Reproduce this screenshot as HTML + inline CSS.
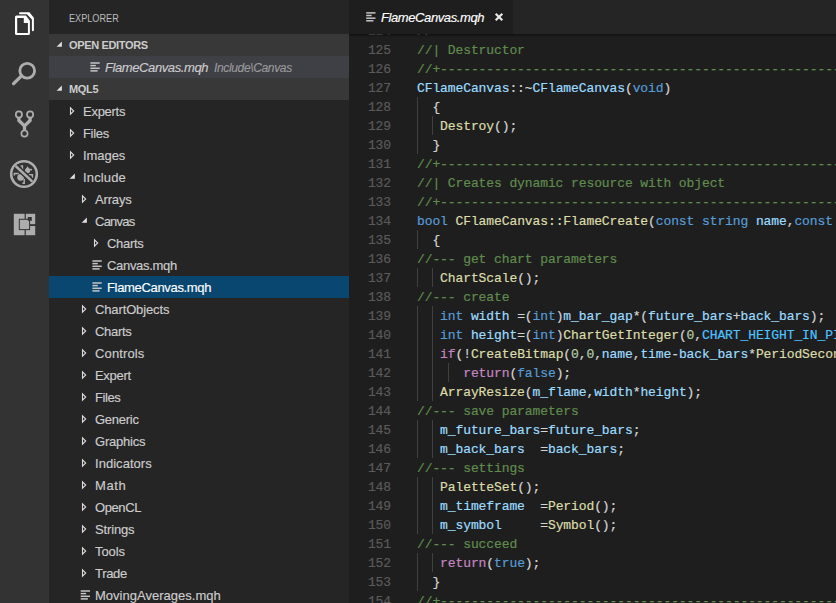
<!DOCTYPE html>
<html><head><meta charset="utf-8">
<style>
*{margin:0;padding:0;box-sizing:border-box}
html,body{width:836px;height:603px;overflow:hidden;background:#1e1e1e}
body{position:relative;font-family:"Liberation Sans",sans-serif}
.ic{position:absolute;left:0;top:0}
#act{position:absolute;left:0;top:0;width:49px;height:603px;background:#333333}
#side{position:absolute;left:49px;top:0;width:300px;height:603px;background:#252526;overflow:hidden}
.title{position:absolute;left:20px;top:12px;font-size:11px;line-height:12px;color:#bbbbbb;transform:scaleX(0.83);transform-origin:0 0}
.hdr{position:absolute;left:0;width:300px;height:22px;background:#383838}
.hdr .t{position:absolute;left:20px;top:0;font-size:11px;font-weight:bold;line-height:22px;color:#cccccc;letter-spacing:-0.35px}
.row{position:absolute;left:0;width:300px;height:22px;font-size:13px;line-height:22px;color:#cccccc;white-space:nowrap;-webkit-text-stroke:0.15px currentColor}
.row .t{position:absolute;top:1px;letter-spacing:-0.3px}
.oe{background:#3f3f46}
.it{font-style:italic;letter-spacing:-0.4px !important}
.it2{font-style:italic;font-size:12px;color:#9a9a9c;letter-spacing:-0.35px !important}
.sel{background:#094771;color:#ffffff}
#ed{position:absolute;left:349px;top:0;width:487px;height:603px;background:#1e1e1e;overflow:hidden}
#code{position:absolute;left:0;top:22px;width:487px;font-family:"Liberation Mono",monospace;font-size:13px;letter-spacing:-0.1px;line-height:19px;white-space:pre;color:#d4d4d4;-webkit-text-stroke:0.2px currentColor}
.ln{position:absolute;left:0;width:487px;height:19px}
.ln .n{position:absolute;left:0;width:42px;text-align:right;color:#5a5a5a}
.ln .c{position:absolute;left:68px}
.g{position:absolute;top:-1px;width:1px;height:19px;background:#404040}
.cm{color:#608b4e}.kw{color:#569cd6}.fn{color:#dcdcaa}.vr{color:#9cdcfe}.nm{color:#b5cea8}.ct{color:#c586c0}.cs{color:#4fc1ff}
#tabs{position:absolute;left:0;top:0;width:487px;height:34px;background:#252526}
#tab{position:absolute;left:0;top:0;width:164px;height:34px;background:#1e1e1e}
#tab .t{position:absolute;left:32px;top:10px;font-style:italic;font-size:13px;line-height:15px;color:#ffffff;letter-spacing:-0.4px;-webkit-text-stroke:0.15px currentColor}
#shadow{position:absolute;left:0;top:34px;width:487px;height:3px;background:linear-gradient(rgba(0,0,0,0.45),rgba(0,0,0,0))}

</style></head><body>
<div id="act">
<svg width="49" height="603" viewBox="0 0 49 603" style="position:absolute;left:0;top:0">
 <path fill="#ffffff" d="M20,12.3 L29.4,12.3 L33.9,17.7 L33.9,30.2 Q33.9,31.2 32.9,31.2 Q31.9,31.2 31.9,30.2 L31.9,19.4 L26.9,14.3 L20,14.3 Q19,14.3 19,13.3 Q19,12.3 20,12.3 Z"/>
 <path fill="#ffffff" fill-rule="evenodd" d="M16.5,15.6 L25.9,15.6 L29.9,20.7 L29.9,33.6 Q29.9,35.1 28.4,35.1 L16.5,35.1 Q15,35.1 15,33.6 L15,17 Q15,15.5 16.5,15.5 Z M17.2,18 L23.8,18 L23.8,22.9 L27.9,22.9 L27.9,32.9 L17.2,32.9 Z"/>
 <circle cx="27.2" cy="70.7" r="7.4" fill="none" stroke="#adadad" stroke-width="2.8"/>
 <line x1="13.6" y1="83.6" x2="21.5" y2="75.9" stroke="#adadad" stroke-width="3.4" stroke-linecap="round"/>
 <g fill="none" stroke="#adadad">
  <circle cx="18.9" cy="114.5" r="3.1" stroke-width="1.7"/>
  <circle cx="30.1" cy="114.5" r="3.1" stroke-width="1.7"/>
  <circle cx="24.5" cy="133.6" r="3.1" stroke-width="1.7"/>
  <path d="M18.9,117.5 L18.9,120.5 L24.5,126 L30.1,120.5 L30.1,117.5 M24.5,125 L24.5,130.5" stroke-width="3.3"/>
 </g>
 <circle cx="24" cy="174" r="12.8" fill="none" stroke="#adadad" stroke-width="2.6"/>
 <g fill="#adadad">
  <circle cx="20.6" cy="177.4" r="3.3"/>
  <circle cx="27.6" cy="170.6" r="2.6"/><path d="M25.4,169.4 L27.6,166.2 L29.8,169.4 Z"/>
 </g>
 <g fill="none" stroke="#adadad" stroke-width="1.5">
  <path d="M14.4,175.6 L14.4,173.6 L18.8,173.6"/>
  <path d="M24.2,178.8 L24.2,183.3 L22.4,183.3"/>
  <path d="M20.6,165.9 L22.4,165.9 L22.4,170.5"/>
  <path d="M29,169.6 L32,169.6"/>
  <path d="M28.4,174.8 L32.4,174.8 L32.4,177.8"/>
 </g>
 <line x1="15.6" y1="166.0" x2="32.4" y2="181.6" stroke="#333333" stroke-width="5.4"/>
 <line x1="15.6" y1="166.0" x2="32.4" y2="181.6" stroke="#adadad" stroke-width="2.5"/>
 <g fill="#adadad">
  <rect x="13.8" y="213.8" width="10.8" height="21.4"/>
  <rect x="25.8" y="213.8" width="9.4" height="10.4"/>
  <rect x="25.8" y="226" width="9.4" height="9.2"/>
 </g>
 <rect x="18.8" y="218.8" width="11.3" height="11.3" fill="#333333"/>
 <rect x="19.8" y="219.8" width="9.3" height="9.3" fill="#adadad"/>
 <rect x="27.8" y="217" width="4" height="3.8" fill="#333333"/>
</svg>

</div>
<div id="side">
 <div class="title">EXPLORER</div>
 <div class="hdr" style="top:34px"><svg class="ic" width="20" height="22"><path d="M7.6,12.7 L12.9,12.7 L12.9,7.6 Z" fill="#e0e0e0"/></svg><span class="t">OPEN EDITORS</span></div>
 <div class="row oe" style="top:56px"><svg class="ic" width="60" height="22"><rect x="41.40" y="6.25" width="9.3" height="1.5" fill="#c5c5c5"/><rect x="41.40" y="8.85" width="5.4" height="1.5" fill="#c5c5c5"/><rect x="41.40" y="11.55" width="9.3" height="1.5" fill="#c5c5c5"/><rect x="41.40" y="14.15" width="7.2" height="1.5" fill="#c5c5c5"/></svg><span class="t it" style="left:56px">FlameCanvas.mqh</span><span class="t it2" style="left:165px">Include\Canvas</span></div>
 <div class="hdr" style="top:78px"><svg class="ic" width="20" height="22"><path d="M7.6,12.7 L12.9,12.7 L12.9,7.6 Z" fill="#e0e0e0"/></svg><span class="t">MQL5</span></div>
<div class="row" style="top:100px"><svg class="ic" width="80" height="22"><path d="M21.5,7.8 L21.5,14.2 L24.7,11 Z" fill="none" stroke="#dcdcdc" stroke-width="1.1" stroke-linejoin="miter"/></svg><span class="t" style="left:34px;letter-spacing:-0.27px">Experts</span></div>
<div class="row" style="top:122px"><svg class="ic" width="80" height="22"><path d="M21.5,7.8 L21.5,14.2 L24.7,11 Z" fill="none" stroke="#dcdcdc" stroke-width="1.1" stroke-linejoin="miter"/></svg><span class="t" style="left:34px;letter-spacing:-0.32px">Files</span></div>
<div class="row" style="top:144px"><svg class="ic" width="80" height="22"><path d="M21.5,7.8 L21.5,14.2 L24.7,11 Z" fill="none" stroke="#dcdcdc" stroke-width="1.1" stroke-linejoin="miter"/></svg><span class="t" style="left:34px;letter-spacing:-0.06px">Images</span></div>
<div class="row" style="top:166px"><svg class="ic" width="80" height="22"><path d="M20.6,12.7 L25.9,12.7 L25.9,7.6 Z" fill="#e0e0e0"/></svg><span class="t" style="left:34px;letter-spacing:0.15px">Include</span></div>
<div class="row" style="top:188px"><svg class="ic" width="80" height="22"><path d="M33.5,7.8 L33.5,14.2 L36.7,11 Z" fill="none" stroke="#dcdcdc" stroke-width="1.1" stroke-linejoin="miter"/></svg><span class="t" style="left:46px;letter-spacing:-0.16px">Arrays</span></div>
<div class="row" style="top:210px"><svg class="ic" width="80" height="22"><path d="M32.6,12.7 L37.9,12.7 L37.9,7.6 Z" fill="#e0e0e0"/></svg><span class="t" style="left:46px;letter-spacing:-0.76px">Canvas</span></div>
<div class="row" style="top:232px"><svg class="ic" width="80" height="22"><path d="M45.5,7.8 L45.5,14.2 L48.7,11 Z" fill="none" stroke="#dcdcdc" stroke-width="1.1" stroke-linejoin="miter"/></svg><span class="t" style="left:58px;letter-spacing:-0.30px">Charts</span></div>
<div class="row" style="top:254px"><svg class="ic" width="60" height="22"><rect x="43.40" y="6.25" width="9.3" height="1.5" fill="#c5c5c5"/><rect x="43.40" y="8.85" width="5.4" height="1.5" fill="#c5c5c5"/><rect x="43.40" y="11.55" width="9.3" height="1.5" fill="#c5c5c5"/><rect x="43.40" y="14.15" width="7.2" height="1.5" fill="#c5c5c5"/></svg><span class="t" style="left:58px;letter-spacing:-0.31px">Canvas.mqh</span></div>
<div class="row sel" style="top:276px"><svg class="ic" width="60" height="22"><rect x="43.40" y="6.25" width="9.3" height="1.5" fill="#c5c5c5"/><rect x="43.40" y="8.85" width="5.4" height="1.5" fill="#c5c5c5"/><rect x="43.40" y="11.55" width="9.3" height="1.5" fill="#c5c5c5"/><rect x="43.40" y="14.15" width="7.2" height="1.5" fill="#c5c5c5"/></svg><span class="t" style="left:58px;letter-spacing:-0.33px">FlameCanvas.mqh</span></div>
<div class="row" style="top:298px"><svg class="ic" width="80" height="22"><path d="M33.5,7.8 L33.5,14.2 L36.7,11 Z" fill="none" stroke="#dcdcdc" stroke-width="1.1" stroke-linejoin="miter"/></svg><span class="t" style="left:46px;letter-spacing:-0.13px">ChartObjects</span></div>
<div class="row" style="top:320px"><svg class="ic" width="80" height="22"><path d="M33.5,7.8 L33.5,14.2 L36.7,11 Z" fill="none" stroke="#dcdcdc" stroke-width="1.1" stroke-linejoin="miter"/></svg><span class="t" style="left:46px;letter-spacing:-0.30px">Charts</span></div>
<div class="row" style="top:342px"><svg class="ic" width="80" height="22"><path d="M33.5,7.8 L33.5,14.2 L36.7,11 Z" fill="none" stroke="#dcdcdc" stroke-width="1.1" stroke-linejoin="miter"/></svg><span class="t" style="left:46px;letter-spacing:0.13px">Controls</span></div>
<div class="row" style="top:364px"><svg class="ic" width="80" height="22"><path d="M33.5,7.8 L33.5,14.2 L36.7,11 Z" fill="none" stroke="#dcdcdc" stroke-width="1.1" stroke-linejoin="miter"/></svg><span class="t" style="left:46px;letter-spacing:-0.30px">Expert</span></div>
<div class="row" style="top:386px"><svg class="ic" width="80" height="22"><path d="M33.5,7.8 L33.5,14.2 L36.7,11 Z" fill="none" stroke="#dcdcdc" stroke-width="1.1" stroke-linejoin="miter"/></svg><span class="t" style="left:46px;letter-spacing:-0.40px">Files</span></div>
<div class="row" style="top:408px"><svg class="ic" width="80" height="22"><path d="M33.5,7.8 L33.5,14.2 L36.7,11 Z" fill="none" stroke="#dcdcdc" stroke-width="1.1" stroke-linejoin="miter"/></svg><span class="t" style="left:46px;letter-spacing:-0.27px">Generic</span></div>
<div class="row" style="top:430px"><svg class="ic" width="80" height="22"><path d="M33.5,7.8 L33.5,14.2 L36.7,11 Z" fill="none" stroke="#dcdcdc" stroke-width="1.1" stroke-linejoin="miter"/></svg><span class="t" style="left:46px;letter-spacing:-0.23px">Graphics</span></div>
<div class="row" style="top:452px"><svg class="ic" width="80" height="22"><path d="M33.5,7.8 L33.5,14.2 L36.7,11 Z" fill="none" stroke="#dcdcdc" stroke-width="1.1" stroke-linejoin="miter"/></svg><span class="t" style="left:46px;letter-spacing:0.04px">Indicators</span></div>
<div class="row" style="top:474px"><svg class="ic" width="80" height="22"><path d="M33.5,7.8 L33.5,14.2 L36.7,11 Z" fill="none" stroke="#dcdcdc" stroke-width="1.1" stroke-linejoin="miter"/></svg><span class="t" style="left:46px;letter-spacing:0.60px">Math</span></div>
<div class="row" style="top:496px"><svg class="ic" width="80" height="22"><path d="M33.5,7.8 L33.5,14.2 L36.7,11 Z" fill="none" stroke="#dcdcdc" stroke-width="1.1" stroke-linejoin="miter"/></svg><span class="t" style="left:46px;letter-spacing:-0.40px">OpenCL</span></div>
<div class="row" style="top:518px"><svg class="ic" width="80" height="22"><path d="M33.5,7.8 L33.5,14.2 L36.7,11 Z" fill="none" stroke="#dcdcdc" stroke-width="1.1" stroke-linejoin="miter"/></svg><span class="t" style="left:46px;letter-spacing:-0.15px">Strings</span></div>
<div class="row" style="top:540px"><svg class="ic" width="80" height="22"><path d="M33.5,7.8 L33.5,14.2 L36.7,11 Z" fill="none" stroke="#dcdcdc" stroke-width="1.1" stroke-linejoin="miter"/></svg><span class="t" style="left:46px;letter-spacing:-0.07px">Tools</span></div>
<div class="row" style="top:562px"><svg class="ic" width="80" height="22"><path d="M33.5,7.8 L33.5,14.2 L36.7,11 Z" fill="none" stroke="#dcdcdc" stroke-width="1.1" stroke-linejoin="miter"/></svg><span class="t" style="left:46px;letter-spacing:-0.32px">Trade</span></div>
<div class="row" style="top:584px"><svg class="ic" width="60" height="22"><rect x="31.70" y="6.25" width="9.3" height="1.5" fill="#c5c5c5"/><rect x="31.70" y="8.85" width="5.4" height="1.5" fill="#c5c5c5"/><rect x="31.70" y="11.55" width="9.3" height="1.5" fill="#c5c5c5"/><rect x="31.70" y="14.15" width="7.2" height="1.5" fill="#c5c5c5"/></svg><span class="t" style="left:46px;letter-spacing:0.02px">MovingAverages.mqh</span></div>
</div>
<div id="ed">
 <div id="code">
<div class="ln" style="top:0px"><span class="n">124</span><span class="c"><span class="cm">//+------------------------------------------------------------------+</span></span></div>
<div class="ln" style="top:19px"><span class="n">125</span><span class="c"><span class="cm">//| Destructor                                                       |</span></span></div>
<div class="ln" style="top:38px"><span class="n">126</span><span class="c"><span class="cm">//+------------------------------------------------------------------+</span></span></div>
<div class="ln" style="top:57px"><span class="n">127</span><span class="c"><span class="vr">CFlameCanvas</span>::~<span class="vr">CFlameCanvas</span>(<span class="kw">void</span>)</span></div>
<div class="ln" style="top:76px"><span class="n">128</span><i class="g" style="left:68px"></i><span class="c">  {</span></div>
<div class="ln" style="top:95px"><span class="n">129</span><i class="g" style="left:68px"></i><i class="g" style="left:83px"></i><span class="c">   <span class="fn">Destroy</span>();</span></div>
<div class="ln" style="top:114px"><span class="n">130</span><i class="g" style="left:68px"></i><span class="c">  }</span></div>
<div class="ln" style="top:133px"><span class="n">131</span><span class="c"><span class="cm">//+------------------------------------------------------------------+</span></span></div>
<div class="ln" style="top:152px"><span class="n">132</span><span class="c"><span class="cm">//| Creates dynamic resource with object                             |</span></span></div>
<div class="ln" style="top:171px"><span class="n">133</span><span class="c"><span class="cm">//+------------------------------------------------------------------+</span></span></div>
<div class="ln" style="top:190px"><span class="n">134</span><span class="c"><span class="kw">bool</span> <span class="fn">CFlameCanvas::FlameCreate</span>(<span class="kw">const</span> <span class="kw">string</span> <span class="vr">name</span>,<span class="kw">const</span> <span class="kw">datetime</span> <span class="vr">time</span></span></div>
<div class="ln" style="top:209px"><span class="n">135</span><i class="g" style="left:68px"></i><span class="c">  {</span></div>
<div class="ln" style="top:228px"><span class="n">136</span><span class="c"><span class="cm">//--- get chart parameters</span></span></div>
<div class="ln" style="top:247px"><span class="n">137</span><i class="g" style="left:68px"></i><i class="g" style="left:83px"></i><span class="c">   <span class="fn">ChartScale</span>();</span></div>
<div class="ln" style="top:266px"><span class="n">138</span><span class="c"><span class="cm">//--- create</span></span></div>
<div class="ln" style="top:285px"><span class="n">139</span><i class="g" style="left:68px"></i><i class="g" style="left:83px"></i><span class="c">   <span class="kw">int</span> <span class="vr">width</span> =(<span class="kw">int</span>)<span class="vr">m_bar_gap</span>*(<span class="vr">future_bars</span>+<span class="vr">back_bars</span>);</span></div>
<div class="ln" style="top:304px"><span class="n">140</span><i class="g" style="left:68px"></i><i class="g" style="left:83px"></i><span class="c">   <span class="kw">int</span> <span class="vr">height</span>=(<span class="kw">int</span>)<span class="fn">ChartGetInteger</span>(<span class="nm">0</span>,<span class="cs">CHART_HEIGHT_IN_PIXELS</span>);</span></div>
<div class="ln" style="top:323px"><span class="n">141</span><i class="g" style="left:68px"></i><i class="g" style="left:83px"></i><span class="c">   <span class="ct">if</span>(!<span class="fn">CreateBitmap</span>(<span class="nm">0</span>,<span class="nm">0</span>,<span class="vr">name</span>,<span class="vr">time</span>-<span class="vr">back_bars</span>*<span class="fn">PeriodSeconds</span>(),<span class="nm">0</span></span></div>
<div class="ln" style="top:342px"><span class="n">142</span><i class="g" style="left:68px"></i><i class="g" style="left:83px"></i><i class="g" style="left:99px"></i><span class="c">      <span class="ct">return</span>(<span class="kw">false</span>);</span></div>
<div class="ln" style="top:361px"><span class="n">143</span><i class="g" style="left:68px"></i><i class="g" style="left:83px"></i><span class="c">   <span class="fn">ArrayResize</span>(<span class="vr">m_flame</span>,<span class="vr">width</span>*<span class="vr">height</span>);</span></div>
<div class="ln" style="top:380px"><span class="n">144</span><span class="c"><span class="cm">//--- save parameters</span></span></div>
<div class="ln" style="top:399px"><span class="n">145</span><i class="g" style="left:68px"></i><i class="g" style="left:83px"></i><span class="c">   <span class="vr">m_future_bars</span>=<span class="vr">future_bars</span>;</span></div>
<div class="ln" style="top:418px"><span class="n">146</span><i class="g" style="left:68px"></i><i class="g" style="left:83px"></i><span class="c">   <span class="vr">m_back_bars</span>  =<span class="vr">back_bars</span>;</span></div>
<div class="ln" style="top:437px"><span class="n">147</span><span class="c"><span class="cm">//--- settings</span></span></div>
<div class="ln" style="top:456px"><span class="n">148</span><i class="g" style="left:68px"></i><i class="g" style="left:83px"></i><span class="c">   <span class="fn">PaletteSet</span>();</span></div>
<div class="ln" style="top:475px"><span class="n">149</span><i class="g" style="left:68px"></i><i class="g" style="left:83px"></i><span class="c">   <span class="vr">m_timeframe</span>  =<span class="fn">Period</span>();</span></div>
<div class="ln" style="top:494px"><span class="n">150</span><i class="g" style="left:68px"></i><i class="g" style="left:83px"></i><span class="c">   <span class="vr">m_symbol</span>     =<span class="fn">Symbol</span>();</span></div>
<div class="ln" style="top:513px"><span class="n">151</span><span class="c"><span class="cm">//--- succeed</span></span></div>
<div class="ln" style="top:532px"><span class="n">152</span><i class="g" style="left:68px"></i><i class="g" style="left:83px"></i><span class="c">   <span class="ct">return</span>(<span class="kw">true</span>);</span></div>
<div class="ln" style="top:551px"><span class="n">153</span><i class="g" style="left:68px"></i><span class="c">  }</span></div>
<div class="ln" style="top:570px"><span class="n">154</span><span class="c"><span class="cm">//+------------------------------------------------------------------+</span></span></div>
 </div>
 <div id="shadow"></div>
 <div id="tabs"><div id="tab"><svg class="ic" width="40" height="34"><rect x="17.20" y="12.15" width="9.3" height="1.5" fill="#c5c5c5"/><rect x="17.20" y="14.75" width="5.4" height="1.5" fill="#c5c5c5"/><rect x="17.20" y="17.45" width="9.3" height="1.5" fill="#c5c5c5"/><rect x="17.20" y="20.05" width="7.2" height="1.5" fill="#c5c5c5"/></svg><span class="t">FlameCanvas.mqh</span><svg class="ic" style="left:140px" width="20" height="34"><path d="M6.7,13.7 L13.3,20.3 M13.3,13.7 L6.7,20.3" stroke="#e8e8e8" stroke-width="2.2"/></svg></div></div>
</div>
</body></html>
